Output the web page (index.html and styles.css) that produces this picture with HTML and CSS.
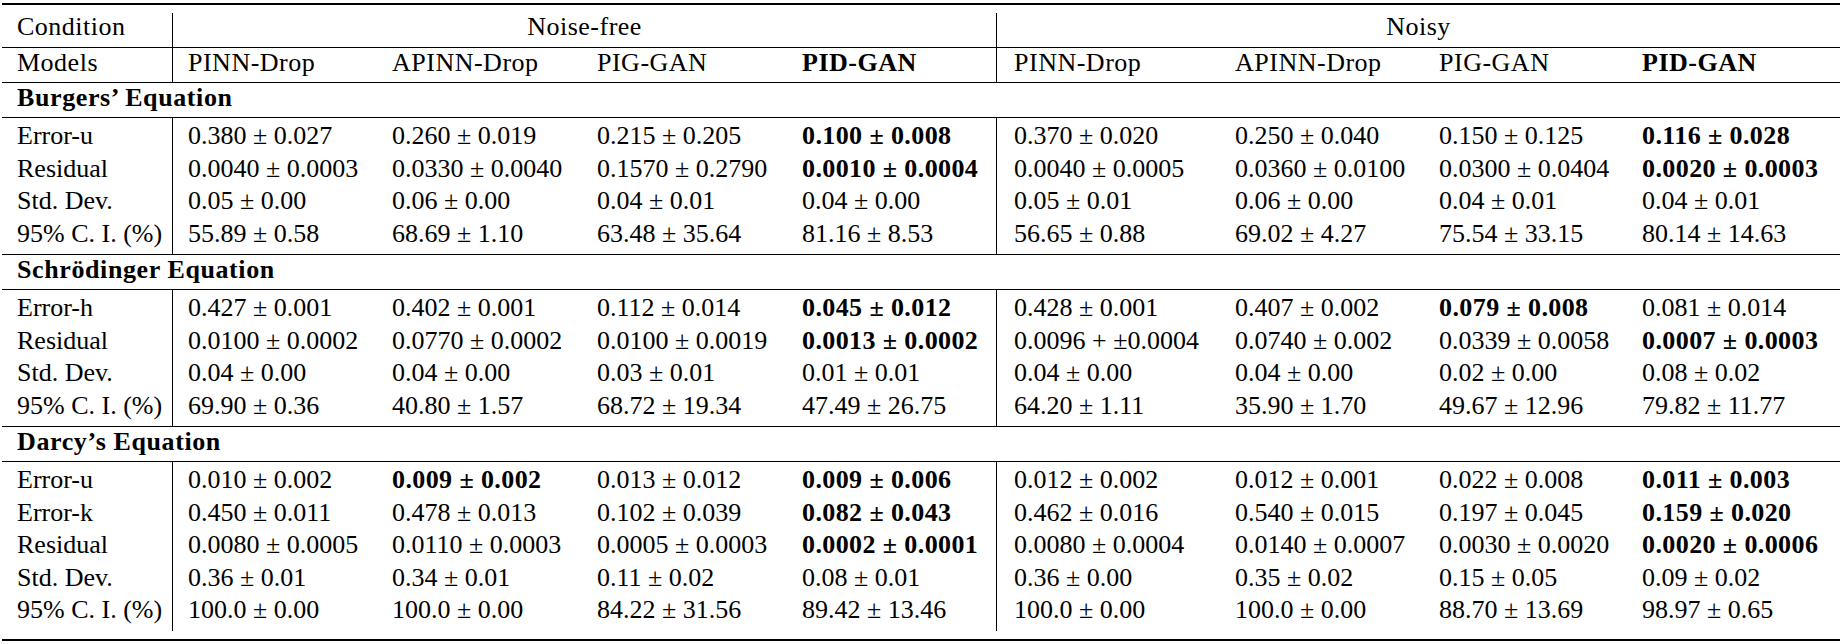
FILE: index.html
```html
<!DOCTYPE html>
<html>
<head>
<meta charset="utf-8">
<link rel="stylesheet" href="styles.css">
</head>
<body>
<div class="wrap">
  <div class="rule"></div>
  <table class="results">
    <colgroup>
      <col class="c0"><col class="c1"><col class="c2"><col class="c3"><col class="c4">
      <col class="c5"><col class="c6"><col class="c7"><col class="c8">
    </colgroup>
    <tbody>
      <tr class="hdr1 hl">
        <td class="lab vr">Condition</td>
        <td colspan="4" class="center vr">Noise-free</td>
        <td colspan="4" class="center">Noisy</td>
      </tr>
      <tr class="hdr2 hl">
        <td class="lab vr">Models</td>
        <td class="c1p">PINN-Drop</td><td>APINN-Drop</td><td>PIG-GAN</td><td class="b vr">PID-GAN</td>
        <td>PINN-Drop</td><td>APINN-Drop</td><td>PIG-GAN</td><td class="b">PID-GAN</td>
      </tr>
      <tr class="title hl"><td colspan="9" class="lab b">Burgers’ Equation</td></tr>

      <tr class="first">
        <td class="lab vr">Error-u</td>
        <td class="c1p">0.380 ± 0.027</td><td>0.260 ± 0.019</td><td>0.215 ± 0.205</td><td class="b vr">0.100 ± 0.008</td>
        <td>0.370 ± 0.020</td><td>0.250 ± 0.040</td><td>0.150 ± 0.125</td><td class="b">0.116 ± 0.028</td>
      </tr>
      <tr>
        <td class="lab vr">Residual</td>
        <td class="c1p">0.0040 ± 0.0003</td><td>0.0330 ± 0.0040</td><td>0.1570 ± 0.2790</td><td class="b vr">0.0010 ± 0.0004</td>
        <td>0.0040 ± 0.0005</td><td>0.0360 ± 0.0100</td><td>0.0300 ± 0.0404</td><td class="b">0.0020 ± 0.0003</td>
      </tr>
      <tr>
        <td class="lab vr">Std. Dev.</td>
        <td class="c1p">0.05 ± 0.00</td><td>0.06 ± 0.00</td><td>0.04 ± 0.01</td><td class="vr">0.04 ± 0.00</td>
        <td>0.05 ± 0.01</td><td>0.06 ± 0.00</td><td>0.04 ± 0.01</td><td>0.04 ± 0.01</td>
      </tr>
      <tr class="last hl">
        <td class="lab vr">95% C. I. (%)</td>
        <td class="c1p">55.89 ± 0.58</td><td>68.69 ± 1.10</td><td>63.48 ± 35.64</td><td class="vr">81.16 ± 8.53</td>
        <td>56.65 ± 0.88</td><td>69.02 ± 4.27</td><td>75.54 ± 33.15</td><td>80.14 ± 14.63</td>
      </tr>

      <tr class="title hl"><td colspan="9" class="lab b">Schrödinger Equation</td></tr>

      <tr class="first">
        <td class="lab vr">Error-h</td>
        <td class="c1p">0.427 ± 0.001</td><td>0.402 ± 0.001</td><td>0.112 ± 0.014</td><td class="b vr">0.045 ± 0.012</td>
        <td>0.428 ± 0.001</td><td>0.407 ± 0.002</td><td class="b">0.079 ± 0.008</td><td>0.081 ± 0.014</td>
      </tr>
      <tr>
        <td class="lab vr">Residual</td>
        <td class="c1p">0.0100 ± 0.0002</td><td>0.0770 ± 0.0002</td><td>0.0100 ± 0.0019</td><td class="b vr">0.0013 ± 0.0002</td>
        <td>0.0096 + ±0.0004</td><td>0.0740 ± 0.002</td><td>0.0339 ± 0.0058</td><td class="b">0.0007 ± 0.0003</td>
      </tr>
      <tr>
        <td class="lab vr">Std. Dev.</td>
        <td class="c1p">0.04 ± 0.00</td><td>0.04 ± 0.00</td><td>0.03 ± 0.01</td><td class="vr">0.01 ± 0.01</td>
        <td>0.04 ± 0.00</td><td>0.04 ± 0.00</td><td>0.02 ± 0.00</td><td>0.08 ± 0.02</td>
      </tr>
      <tr class="last hl">
        <td class="lab vr">95% C. I. (%)</td>
        <td class="c1p">69.90 ± 0.36</td><td>40.80 ± 1.57</td><td>68.72 ± 19.34</td><td class="vr">47.49 ± 26.75</td>
        <td>64.20 ± 1.11</td><td>35.90 ± 1.70</td><td>49.67 ± 12.96</td><td>79.82 ± 11.77</td>
      </tr>

      <tr class="title hl"><td colspan="9" class="lab b">Darcy’s Equation</td></tr>

      <tr class="first">
        <td class="lab vr">Error-u</td>
        <td class="c1p">0.010 ± 0.002</td><td class="b">0.009 ± 0.002</td><td>0.013 ± 0.012</td><td class="b vr">0.009 ± 0.006</td>
        <td>0.012 ± 0.002</td><td>0.012 ± 0.001</td><td>0.022 ± 0.008</td><td class="b">0.011 ± 0.003</td>
      </tr>
      <tr>
        <td class="lab vr">Error-k</td>
        <td class="c1p">0.450 ± 0.011</td><td>0.478 ± 0.013</td><td>0.102 ± 0.039</td><td class="b vr">0.082 ± 0.043</td>
        <td>0.462 ± 0.016</td><td>0.540 ± 0.015</td><td>0.197 ± 0.045</td><td class="b">0.159 ± 0.020</td>
      </tr>
      <tr>
        <td class="lab vr">Residual</td>
        <td class="c1p">0.0080 ± 0.0005</td><td>0.0110 ± 0.0003</td><td>0.0005 ± 0.0003</td><td class="b vr">0.0002 ± 0.0001</td>
        <td>0.0080 ± 0.0004</td><td>0.0140 ± 0.0007</td><td>0.0030 ± 0.0020</td><td class="b">0.0020 ± 0.0006</td>
      </tr>
      <tr>
        <td class="lab vr">Std. Dev.</td>
        <td class="c1p">0.36 ± 0.01</td><td>0.34 ± 0.01</td><td>0.11 ± 0.02</td><td class="vr">0.08 ± 0.01</td>
        <td>0.36 ± 0.00</td><td>0.35 ± 0.02</td><td>0.15 ± 0.05</td><td>0.09 ± 0.02</td>
      </tr>
      <tr class="last">
        <td class="lab vr">95% C. I. (%)</td>
        <td class="c1p">100.0 ± 0.00</td><td>100.0 ± 0.00</td><td>84.22 ± 31.56</td><td class="vr">89.42 ± 13.46</td>
        <td>100.0 ± 0.00</td><td>100.0 ± 0.00</td><td>88.70 ± 13.69</td><td>98.97 ± 0.65</td>
      </tr>
    </tbody>
  </table>
  <div class="rule"></div>
</div>
</body>
</html>
```

FILE: styles.css
```css
html, body {
  margin: 0;
  padding: 0;
  background: #ffffff;
}

body {
  font-family: "Liberation Serif", "Times New Roman", "DejaVu Serif", serif;
  font-size: 26px;
  color: #000;
}

.wrap {
  width: 1838px;
  margin-left: 2px;
  padding-top: 3px;
  display: flex;
  flex-direction: column;
}

.rule {
  height: 2px;
  background: #000;
}

.results {
  table-layout: fixed;
  width: 1838px;
  border-collapse: separate;
  border-spacing: 0;
  margin: 8px 0 8px;
}

col.c0 { width: 171px; }
col.c1 { width: 202px; }
col.c2 { width: 205px; }
col.c3 { width: 205px; }
col.c4 { width: 212px; }
col.c5 { width: 221px; }
col.c6 { width: 204px; }
col.c7 { width: 203px; }
col.c8 { width: 215px; }

.results td {
  padding: 0 0 0 17px;
  line-height: 32.5px;
  white-space: nowrap;
  text-align: left;
  vertical-align: top;
}

.results td.c1p {
  padding-left: 15px;
}

.results td.lab {
  padding-left: 15px;
}

.results tr.hdr1 td,
.results tr.hdr2 td {
  letter-spacing: 0.5px;
}

.results td.center {
  text-align: center;
  padding-left: 0;
}

.results td.b {
  font-weight: bold;
  letter-spacing: 0.4px;
}

.results tr.title td.b {
  letter-spacing: 0.6px;
}

.results td.vr {
  border-right: 1px solid #000;
}

.results tr.hl td {
  border-bottom: 1px solid #000;
}

.results tr.hdr1 td {
  line-height: 28px;
  padding-top: 0;
  padding-bottom: 6px;
}

.results tr.hdr2 td {
  line-height: 28px;
  padding-top: 1px;
  padding-bottom: 5px;
}

.results tr.title td {
  line-height: 28px;
  padding-top: 1px;
  padding-bottom: 5px;
}

.results tr.first td {
  padding-top: 2px;
}

.results tr.last td {
  padding-bottom: 4px;
}
```
